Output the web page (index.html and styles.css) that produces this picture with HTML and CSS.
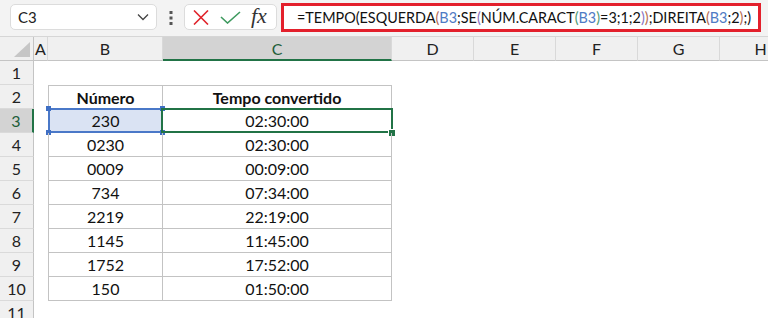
FILE: index.html
```html
<!DOCTYPE html>
<html lang="pt">
<head>
<meta charset="utf-8">
<title>Planilha</title>
<link rel="stylesheet" href="styles.css">
</head>
<body>
<div class="toolbar">
  <div class="namebox">
    <span class="ref">C3</span>
    <svg class="chev" width="12" height="8" viewBox="0 0 12 8"><path d="M1 1.5 L6 6.5 L11 1.5" fill="none" stroke="#444" stroke-width="1.3"/></svg>
  </div>
  <svg class="dots" width="4" height="14" viewBox="0 0 4 14"><rect x="0.5" y="0" width="3" height="3" fill="#555"/><rect x="0.5" y="5.5" width="3" height="3" fill="#555"/><rect x="0.5" y="11" width="3" height="3" fill="#555"/></svg>
  <div class="fxbox">
    <svg class="icon-x" width="16" height="15" viewBox="0 0 16 15"><path d="M1 0.5 L15 14.5 M15 0.5 L1 14.5" stroke="#e0242c" stroke-width="1.6" fill="none"/></svg>
    <svg class="icon-ok" width="21" height="13" viewBox="0 0 21 13"><path d="M1 6 L7.5 12 L20 1" stroke="#3e9a5f" stroke-width="1.6" fill="none"/></svg>
    <span class="fx">fx</span>
  </div>
  <div class="formula"><span>=TEMPO(ESQUERDA</span><span class="p1">(</span><span class="ref1">B3</span><span>;SE</span><span class="p2">(</span><span>NÚM.CARACT</span><span class="p3">(</span><span class="ref1">B3</span><span class="p3">)</span><span>=3;1;2</span><span class="p2">)</span><span class="p1">)</span><span>;DIREITA</span><span class="p1">(</span><span class="ref1">B3</span><span>;2</span><span class="p1">)</span><span>;)</span></div>
</div>

<div class="sheet">
  <div class="row colhead">
    <div class="corner"><svg width="16" height="15" viewBox="0 0 16 15"><polygon points="16,0 16,15 0,15" fill="#c6c6c6"/></svg></div>
    <div class="ch">A</div><div class="ch">B</div><div class="ch sel">C</div><div class="ch">D</div><div class="ch">E</div><div class="ch">F</div><div class="ch">G</div><div class="ch">H</div>
  </div>
  <div class="row">
    <div class="rh">1</div><div class="c"></div><div class="c"></div><div class="c"></div><div class="c"></div><div class="c"></div><div class="c"></div><div class="c"></div><div class="c"></div>
  </div>
  <div class="row">
    <div class="rh">2</div><div class="c"></div><div class="c t tl tt th">Número</div><div class="c t tt th">Tempo convertido</div><div class="c"></div><div class="c"></div><div class="c"></div><div class="c"></div><div class="c"></div>
  </div>
  <div class="row">
    <div class="rh rsel">3</div><div class="c"></div>
    <div class="c t tl rng">230<span class="range"></span><span class="hd h-tl"></span><span class="hd h-tr"></span><span class="hd h-bl"></span><span class="hd h-br"></span></div>
    <div class="c t">02:30:00<span class="active"></span><span class="fill"></span></div>
    <div class="c"></div><div class="c"></div><div class="c"></div><div class="c"></div><div class="c"></div>
  </div>
  <div class="row">
    <div class="rh">4</div><div class="c"></div><div class="c t tl">0230</div><div class="c t">02:30:00</div><div class="c"></div><div class="c"></div><div class="c"></div><div class="c"></div><div class="c"></div>
  </div>
  <div class="row">
    <div class="rh">5</div><div class="c"></div><div class="c t tl">0009</div><div class="c t">00:09:00</div><div class="c"></div><div class="c"></div><div class="c"></div><div class="c"></div><div class="c"></div>
  </div>
  <div class="row">
    <div class="rh">6</div><div class="c"></div><div class="c t tl">734</div><div class="c t">07:34:00</div><div class="c"></div><div class="c"></div><div class="c"></div><div class="c"></div><div class="c"></div>
  </div>
  <div class="row">
    <div class="rh">7</div><div class="c"></div><div class="c t tl">2219</div><div class="c t">22:19:00</div><div class="c"></div><div class="c"></div><div class="c"></div><div class="c"></div><div class="c"></div>
  </div>
  <div class="row">
    <div class="rh">8</div><div class="c"></div><div class="c t tl">1145</div><div class="c t">11:45:00</div><div class="c"></div><div class="c"></div><div class="c"></div><div class="c"></div><div class="c"></div>
  </div>
  <div class="row">
    <div class="rh">9</div><div class="c"></div><div class="c t tl">1752</div><div class="c t">17:52:00</div><div class="c"></div><div class="c"></div><div class="c"></div><div class="c"></div><div class="c"></div>
  </div>
  <div class="row">
    <div class="rh">10</div><div class="c"></div><div class="c t tl">150</div><div class="c t">01:50:00</div><div class="c"></div><div class="c"></div><div class="c"></div><div class="c"></div><div class="c"></div>
  </div>
  <div class="row">
    <div class="rh">11</div><div class="c"></div><div class="c"></div><div class="c"></div><div class="c"></div><div class="c"></div><div class="c"></div><div class="c"></div><div class="c"></div>
  </div>
</div>
</body>
</html>
```

FILE: styles.css
```css
html, body {
  margin: 0;
  padding: 0;
}
body {
  width: 768px;
  height: 318px;
  overflow: hidden;
  background: #ffffff;
  font-family: Lato, "Liberation Sans", sans-serif;
  color: #111;
}

/* ---------- toolbar ---------- */
.toolbar {
  box-sizing: border-box;
  height: 37px;
  background: #f3f3f3;
  border-bottom: 1px solid #d6d6d6;
  display: flex;
  align-items: flex-start;
  padding-top: 3px;
}
.namebox {
  box-sizing: border-box;
  margin-left: 10px;
  margin-top: 1px;
  width: 147px;
  height: 26px;
  background: #fff;
  border: 1px solid #dcdcdc;
  border-radius: 5px;
  display: flex;
  align-items: center;
  justify-content: space-between;
  padding: 0 7px 0 7px;
}
.namebox .ref {
  font-size: 15px;
  color: #222;
}
.dots {
  margin-left: 12px;
  margin-top: 8px;
}
.fxbox {
  box-sizing: border-box;
  margin-left: 11px;
  margin-top: 1px;
  width: 93px;
  height: 26px;
  background: #fff;
  border: 1px solid #dcdcdc;
  border-radius: 5px;
  display: flex;
  align-items: center;
  padding-left: 8px;
}
.icon-x { margin-right: 11px; }
.icon-ok { margin-right: 10px; }
.fx {
  font-family: "Liberation Serif", serif;
  font-style: italic;
  font-size: 22px;
  color: #333;
  line-height: 20px;
  margin-top: -2px;
}
.formula {
  box-sizing: border-box;
  margin-left: 4px;
  width: 480px;
  height: 29px;
  border: 3px solid #e3202c;
  background: #fff;
  padding-left: 13px;
  font-size: 14.4px;
  line-height: 23px;
  color: #111;
  white-space: nowrap;
  overflow: hidden;
}
.formula .ref1 { color: #4f7bc4; }
.formula .p1 { color: #b46a52; }
.formula .p2 { color: #8a6fbf; }
.formula .p3 { color: #4d9a72; }

/* ---------- sheet ---------- */
.row {
  display: grid;
  grid-template-columns: 34px 14px 115px 229px 82px 82px 82px 82px 82px;
  height: 24px;
}
.colhead .ch {
  box-sizing: border-box;
  background: #f0f0f0;
  border-right: 1px solid #d9d9d9;
  border-bottom: 1px solid #c4c4c4;
  display: flex;
  align-items: center;
  justify-content: center;
  font-size: 16px;
  color: #222;
}
.colhead .ch.sel {
  background: #d3d3d3;
  border-bottom: 2px solid #217346;
  color: #1e5e39;
}
.corner {
  box-sizing: border-box;
  background: #f0f0f0;
  border-right: 1px solid #c4c4c4;
  border-bottom: 1px solid #c4c4c4;
  display: flex;
  align-items: flex-end;
  justify-content: flex-end;
  padding: 0 3px 3px 0;
}
.rh {
  box-sizing: border-box;
  background: #f0f0f0;
  border-right: 1px solid #c4c4c4;
  border-bottom: 1px solid #dadada;
  display: flex;
  align-items: center;
  justify-content: center;
  font-size: 16px;
  color: #222;
}
.rh.rsel {
  background: #d3d3d3;
  border-right: 2px solid #217346;
  color: #1e5e39;
}
.c {
  box-sizing: border-box;
  position: relative;
  display: flex;
  align-items: center;
  justify-content: center;
  font-size: 16px;
  color: #111;
}
.t {
  border-right: 1px solid #c3c3c3;
  border-bottom: 1px solid #c3c3c3;
}
.tl { border-left: 1px solid #c3c3c3; }
.tt { border-top: 1px solid #c3c3c3; }
.th { font-weight: bold; }

.rng { background: #dae3f3; }
.range {
  position: absolute;
  left: -1px;
  right: -1px;
  top: -1px;
  bottom: -1px;
  border: 2px solid #4a78c8;
  border-right: none;
}
.hd {
  position: absolute;
  width: 5px;
  height: 5px;
  background: #3f6fc4;
}
.h-tl { left: -3px; top: -3px; }
.h-tr { right: -3px; top: -3px; }
.h-bl { left: -3px; bottom: -3px; }
.h-br { right: -3px; bottom: -3px; }
.active {
  position: absolute;
  left: -2px;
  right: -2px;
  top: -1px;
  bottom: -1px;
  border: 2px solid #217346;
}
.fill {
  position: absolute;
  right: -4px;
  bottom: -4px;
  width: 6px;
  height: 6px;
  background: #217346;
  border-left: 1px solid #fff;
  border-top: 1px solid #fff;
}
```
